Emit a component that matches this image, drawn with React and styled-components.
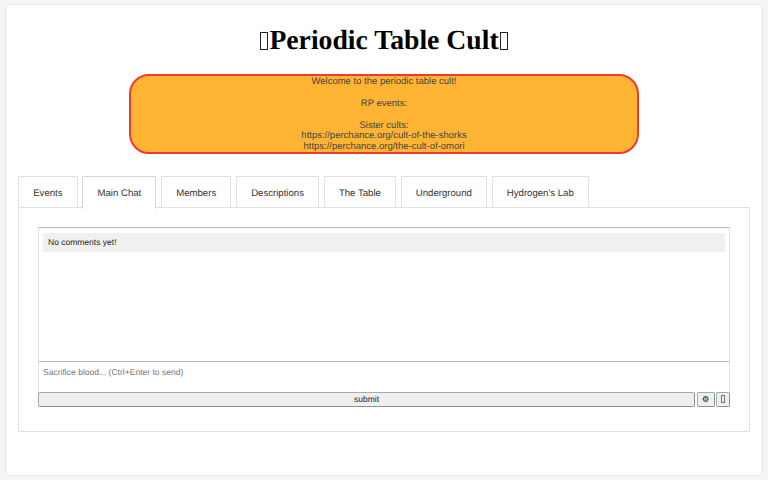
import React from "react";
import styled, { createGlobalStyle } from "styled-components";

const Global = createGlobalStyle`
  html, body { margin: 0; padding: 0; background: #f5f5f5; height: 100%; }
  body { font-family: "Liberation Sans", Arial, sans-serif; color: #333; text-rendering: geometricPrecision; }
  button { text-rendering: geometricPrecision; }
`;

const Page = styled.div`
  box-sizing: border-box;
  width: 768px;
  height: 480px;
  padding: 4px 5px 4px 5px;
  overflow: hidden;
`;

const Card = styled.main`
  box-sizing: border-box;
  height: 472px;
  background: #fff;
  border: 1px solid #e4e4e4;
  border-radius: 3px;
  padding: 0 12px;
  display: flex;
  flex-direction: column;
  align-items: stretch;
`;

const Title = styled.h1`
  margin: 19px 0 0;
  font: bold 27.7px/32px "Liberation Serif", "Times New Roman", serif;
  color: #000;
  text-align: center;
`;

const Tofu = styled.span`
  display: inline-block;
  box-sizing: border-box;
  width: ${(p) => p.$w}px;
  height: ${(p) => p.$h}px;
  margin: 0 ${(p) => p.$gap || 0}px;
  border: 1px solid ${(p) => p.$color || "#222"};
  vertical-align: ${(p) => p.$align || "baseline"};
`;

const Banner = styled.section`
  box-sizing: border-box;
  align-self: center;
  width: 510px;
  height: 80px;
  margin-top: 18px;
  padding-top: 1.4px;
  background: #ffb533;
  border: 2px solid #f0392f;
  border-radius: 20px;
  font-size: 9.5px;
  line-height: 10.8px;
  color: #444;
  text-align: center;
  white-space: pre-line;
  overflow: hidden;
`;

const TabBar = styled.nav`
  display: flex;
  gap: 4.6px;
  margin: 22px 0 -1px;
  position: relative;
  z-index: 1;
`;

const Tab = styled.button`
  box-sizing: border-box;
  height: ${(p) => (p.$active ? "33px" : "32px")};
  margin-bottom: ${(p) => (p.$active ? "-1px" : "0")};
  padding: 2px 14.2px ${(p) => (p.$active ? "2px" : "0")};
  background: #fff;
  border: 1px solid ${(p) => (p.$active ? "#d8d8d8" : "#e0e0e0")};
  border-bottom: ${(p) => (p.$active ? "none" : "1px solid #e0e0e0")};
  font: 9.6px "Liberation Sans", Arial, sans-serif;
  color: #333;
`;

const TabPanel = styled.section`
  box-sizing: border-box;
  height: 225px;
  border: 1px solid #e0e0e0;
  padding: 19px 19px 0;
`;

const Comments = styled.div`
  box-sizing: border-box;
  height: 135px;
  border-top: 1px solid #bbb;
  border-left: 1px solid #e4e4e4;
  border-right: 1px solid #e4e4e4;
  border-bottom: 1px solid #bbb;
  padding: 5px 4px 0;
`;

const Notice = styled.div`
  background: #f0f0f0;
  height: 19px;
  padding-left: 5px;
  font-size: 8.5px;
  line-height: 19px;
  color: #222;
`;

const Input = styled.div`
  box-sizing: border-box;
  height: 30px;
  padding: 4px 4px 0;
  border-left: 1px solid #e4e4e4;
  border-right: 1px solid #e4e4e4;
  font-size: 8.55px;
  line-height: 12px;
  color: #777;
`;

const Actions = styled.div`
  display: flex;
  gap: 1.5px;
  height: 15px;
`;

const Btn = styled.button`
  box-sizing: border-box;
  flex: ${(p) => (p.$grow ? "1" : "none")};
  width: ${(p) => p.$w || "auto"};
  height: 15px;
  padding: 0;
  background: #efefef;
  border: 1px solid #8f8f8f;
  border-top-color: #aaa;
  border-left-color: #aaa;
  border-radius: 2px;
  font: 8.5px/13px "Liberation Sans", Arial, sans-serif;
  color: #222;
`;

const tabs = ["Events", "Main Chat", "Members", "Descriptions", "The Table", "Underground", "Hydrogen's Lab"];

export default function App() {
  return (
    <>
      <Global />
      <Page>
        <Card>
          <Title>
            <Tofu $w={8} $h={18} $gap={1} $align="-1px" />Periodic Table Cult<Tofu $w={8} $h={18} $gap={1} $align="-1px" />
          </Title>
          <Banner>{`Welcome to the periodic table cult!

RP events:

Sister cults:
https://perchance.org/cult-of-the-shorks
https://perchance.org/the-cult-of-omori`}</Banner>
          <TabBar>
            {tabs.map((t) => (
              <Tab key={t} $active={t === "Main Chat"}>{t}</Tab>
            ))}
          </TabBar>
          <TabPanel>
            <Comments>
              <Notice>No comments yet!</Notice>
            </Comments>
            <Input>Sacrifice blood... (Ctrl+Enter to send)</Input>
            <Actions>
              <Btn $grow>submit</Btn>
              <Btn $w="18px">{"\u2699\uFE0E"}</Btn>
              <Btn $w="14px"><Tofu $w={4} $h={8} $color="#777" $align="-1px" /></Btn>
            </Actions>
          </TabPanel>
        </Card>
      </Page>
    </>
  );
}
